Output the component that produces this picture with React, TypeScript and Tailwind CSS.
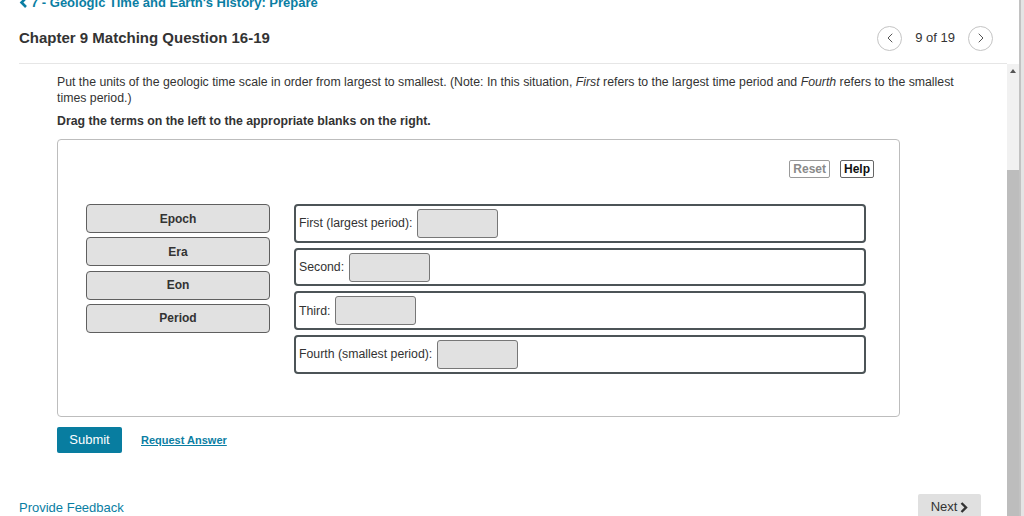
import { ChevronLeft, ChevronRight } from 'lucide-react';

const terms = ['Epoch', 'Era', 'Eon', 'Period'];

const blanks = [
  'First (largest period):',
  'Second:',
  'Third:',
  'Fourth (smallest period):',
];

export default function App() {
  return (
    <div className="w-[1024px] h-[516px] overflow-hidden bg-white flex font-['Liberation_Sans',Arial,sans-serif] text-[#333]">
      <div className="flex-1 flex flex-col min-w-0">
        {/* header */}
        <header className="h-[64px] shrink-0 ml-[19px] mr-[12px] border-b border-[#e6e6e6] pr-[14px]">
          <div className="flex items-center gap-[3px] -mt-[5px] h-[15px] text-[13px] leading-[15px] font-bold text-[#0a7ea3]">
            <svg width="9" height="11" viewBox="0 0 9 11" className="shrink-0">
              <path d="M7 1 L2.5 5.5 L7 10" fill="none" stroke="#0a7ea3" strokeWidth="2.6" />
            </svg>
            <span>7 - Geologic Time and Earth's History: Prepare</span>
          </div>
          <div className="flex items-center justify-between h-[26px] mt-[14px]">
            <h1 className="text-[15px] leading-[17px] font-bold text-[#333]">Chapter 9 Matching Question 16-19</h1>
            <div className="flex items-center mt-[2px]">
              <button className="w-[25px] h-[25px] rounded-full border border-[#c4c4c4] flex items-center justify-center text-[#555]">
                <ChevronLeft size={16} strokeWidth={1.5} />
              </button>
              <span className="ml-[13px] mr-[13px] text-[13px] text-[#333]">9 of 19</span>
              <button className="w-[25px] h-[25px] rounded-full border border-[#c4c4c4] flex items-center justify-center text-[#555]">
                <ChevronRight size={16} strokeWidth={1.5} />
              </button>
            </div>
          </div>
        </header>

        <div className="flex-1 flex min-h-0">
          <main className="flex-1 flex flex-col pl-[19px] pr-[26px]">
            <div className="pl-[38px] pt-[10px]">
              <p className="max-w-[905px] text-[12.3px] leading-[16px] text-[#333]">
                Put the units of the geologic time scale in order from largest to smallest. (Note: In this situation, <i>First</i> refers to the largest time period and <i>Fourth</i> refers to the smallest times period.)
              </p>
              <p className="mt-[7px] text-[12.3px] leading-[16px] font-bold text-[#333]">
                Drag the terms on the left to the appropriate blanks on the right.
              </p>

              {/* drag and drop box */}
              <div className="mt-[10px] w-[843px] h-[278px] border border-[#bdbdbd] rounded-[4px] pt-[20px] pr-[25px] pl-[28px]">
                <div className="flex justify-end gap-[10px]">
                  <button className="h-[18px] px-[3px] border border-[#9a9a9a] rounded-[2px] text-[12px] leading-[16px] font-bold text-[#8a8a8a]">Reset</button>
                  <button className="h-[18px] px-[3px] border border-[#666] rounded-[2px] text-[12px] leading-[16px] font-bold text-[#111]">Help</button>
                </div>
                <div className="flex gap-[24px] mt-[26px]">
                  <div className="w-[184px] flex flex-col gap-[4.3px]">
                    {terms.map((t) => (
                      <div key={t} className="h-[29px] bg-[#e1e1e1] border border-[#5f5f5f] rounded-[4px] flex items-center justify-center text-[12px] font-bold text-[#333]">
                        {t}
                      </div>
                    ))}
                  </div>
                  <div className="w-[572px] flex flex-col gap-[5px]">
                    {blanks.map((b) => (
                      <div key={b} className="h-[38.7px] border-2 border-[#4c5457] rounded-[4px] flex items-center gap-[5px] pl-[3px] text-[12.3px] text-[#333]">
                        <span>{b}</span>
                        <div className="w-[81px] h-[29px] bg-[#e1e1e1] border border-[#777] rounded-[3px]" />
                      </div>
                    ))}
                  </div>
                </div>
              </div>

              <div className="flex items-center mt-[10px]">
                <button className="w-[65px] h-[26px] bg-[#087da0] rounded-[2px] text-white text-[13px]">Submit</button>
                <a className="ml-[19px] text-[11px] font-bold underline text-[#0a7ea3]">Request Answer</a>
              </div>
            </div>

            <div className="flex items-center justify-between mt-[41px]">
              <a className="text-[13px] text-[#0a7ea3] mt-[2px]">Provide Feedback</a>
              <button className="w-[63px] h-[26px] bg-[#e0e0e0] rounded-t-[2px] flex items-center justify-center gap-[3px] text-[13px] text-[#333]">
                Next
                <svg width="8" height="11" viewBox="0 0 8 11">
                  <path d="M1.5 1 L6 5.5 L1.5 10" fill="none" stroke="#333" strokeWidth="2.4" />
                </svg>
              </button>
            </div>
          </main>

          {/* scrollbar */}
          <div className="w-[12px] shrink-0 bg-[#f1f1f1] flex flex-col">
            <div className="h-[14px] flex items-center justify-center">
              <svg width="6" height="4" viewBox="0 0 6 4">
                <path d="M0 4 L3 0 L6 4 Z" fill="#555" />
              </svg>
            </div>
            <div className="h-[92px]" />
            <div className="flex-1 bg-[#bdbdbd]" />
          </div>
        </div>
      </div>
      <div className="w-[5px] shrink-0 border-l-2 border-[#c2c2c2] bg-[#e4e4e4]" />
    </div>
  );
}
